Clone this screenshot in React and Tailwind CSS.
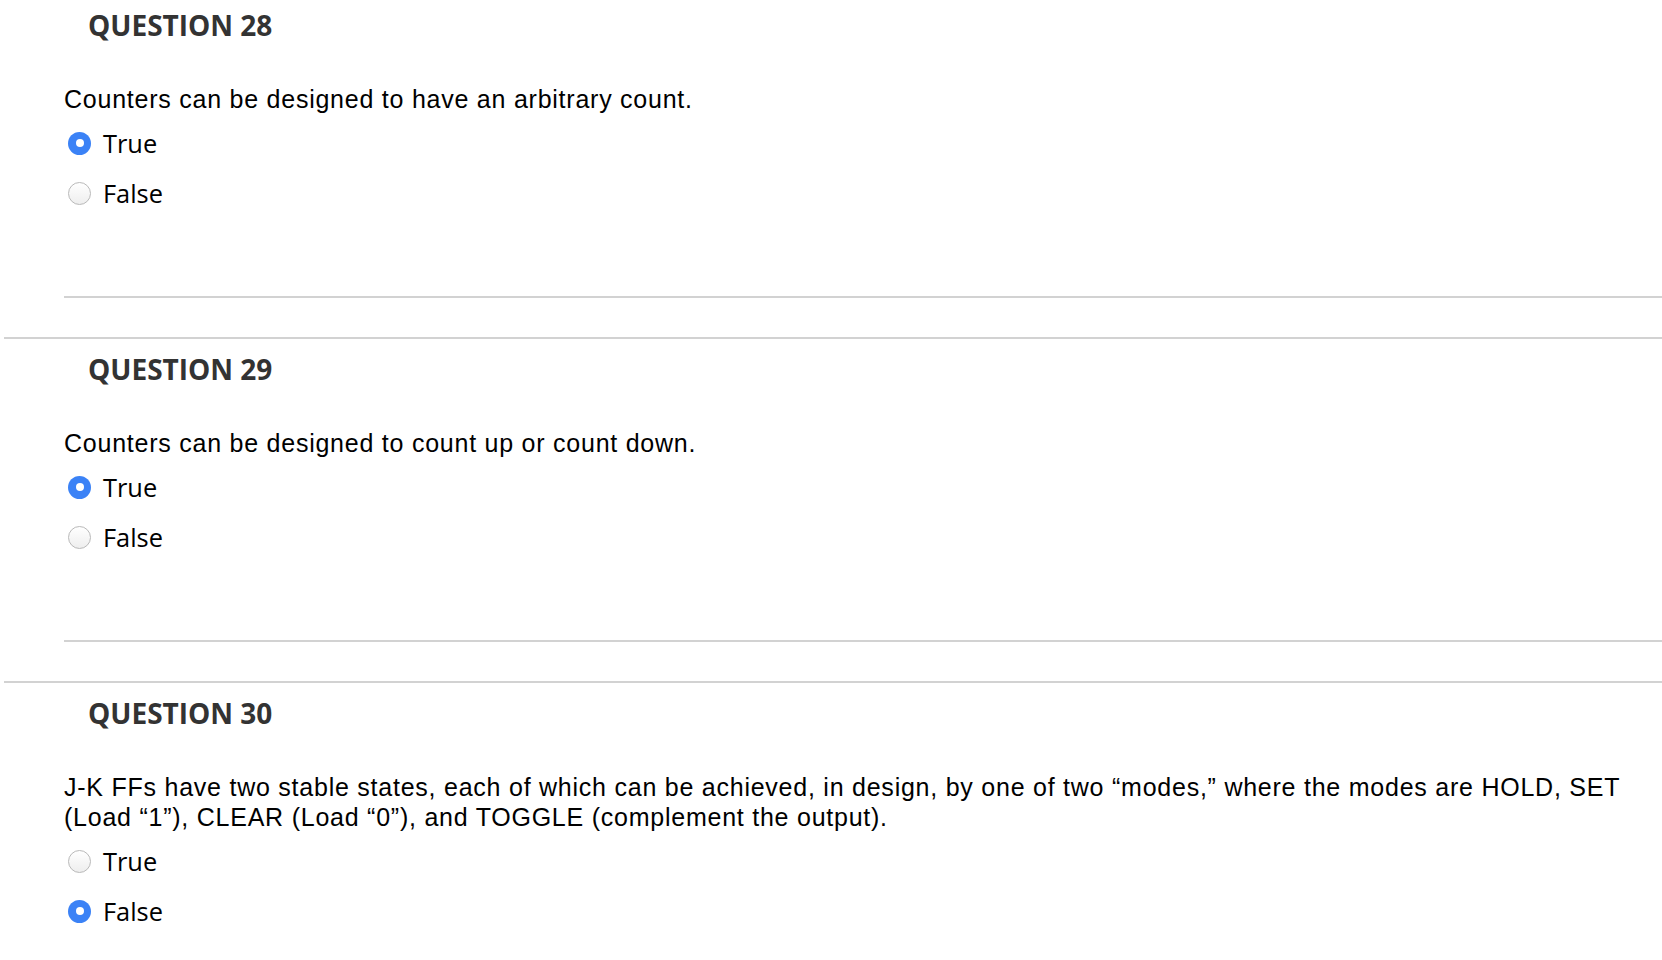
import React from "react";

const questions = [
  {
    n: 28,
    text: ["Counters can be designed to have an arbitrary count."],
    answer: "True",
  },
  {
    n: 29,
    text: ["Counters can be designed to count up or count down."],
    answer: "True",
  },
  {
    n: 30,
    text: [
      "J-K FFs have two stable states, each of which can be achieved, in design, by one of two \u201cmodes,\u201d where the modes are HOLD, SET",
      "(Load \u201c1\u201d), CLEAR (Load \u201c0\u201d), and TOGGLE (complement the output).",
    ],
    answer: "False",
  },
];

function Radio({ checked }) {
  if (checked) {
    return (
      <span className="flex h-[23px] w-[23px] shrink-0 items-center justify-center rounded-full bg-[#3b82f6]">
        <span className="h-[8px] w-[8px] rounded-full bg-white" />
      </span>
    );
  }
  return (
    <span className="h-[23px] w-[23px] shrink-0 rounded-full border border-[#b9b9b9] bg-gradient-to-b from-white to-[#eeeeee]" />
  );
}

function Option({ label, checked }) {
  return (
    <div className="flex h-[50px] items-center pl-[4px]">
      <Radio checked={checked} />
      <span className="ml-[12px] font-['Open_Sans',sans-serif] text-[25.4px] leading-[32px] text-black">
        {label}
      </span>
    </div>
  );
}

function Question({ q, first }) {
  return (
    <section
      className={
        first ? "ml-[4px] pb-[39px]" : "ml-[4px] border-t-2 border-[#d2d2d2] pb-[39px]"
      }
    >
      <div className="pl-[60px]">
        <h2
          className={
            (first ? "mt-[6px] " : "mt-[11px] ") +
            "pl-[24px] font-['Open_Sans',sans-serif] text-[28px] font-bold leading-[38px] text-[#333333]"
          }
        >
          QUESTION {q.n}
        </h2>
        <p className="mt-[40px] font-['Liberation_Sans',Arial,sans-serif] text-[25px] leading-[30px] tracking-[0.76px] text-black">
          {q.text.map((line, i) => (
            <React.Fragment key={i}>
              {i > 0 && <br />}
              {line}
            </React.Fragment>
          ))}
        </p>
        <div className="mt-[4px] flex flex-col">
          <Option label="True" checked={q.answer === "True"} />
          <Option label="False" checked={q.answer === "False"} />
        </div>
        <div className="mt-[78px] h-[2px] bg-[#d2d2d2]" />
      </div>
    </section>
  );
}

export default function App() {
  return (
    <div className="h-screen w-full overflow-hidden bg-white">
      {questions.map((q, i) => (
        <Question key={q.n} q={q} first={i === 0} />
      ))}
    </div>
  );
}
